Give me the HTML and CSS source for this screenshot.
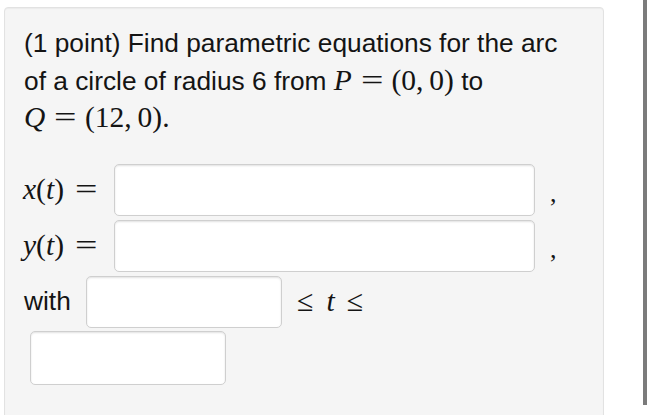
FILE: index.html
```html
<!DOCTYPE html>
<html>
<head>
<meta charset="utf-8">
<link rel="stylesheet" href="styles.css">
</head>
<body>
<div class="page">
  <div class="panel">
    <p class="question">(1 point) Find parametric equations for the arc of a circle of radius 6 from <span class="math"><i>P</i><span class="eq">=</span>(0,&#8201;0)</span> to <span class="math"><i>Q</i><span class="eq">=</span>(12,&#8201;0).</span></p>
    <div class="row">
      <span class="label math"><i>x</i>(<i>t</i>)<span class="eq">=</span></span>
      <span class="field wide"></span>
      <span class="comma">,</span>
    </div>
    <div class="row">
      <span class="label math"><i>y</i>(<i>t</i>)<span class="eq">=</span></span>
      <span class="field wide"></span>
      <span class="comma">,</span>
    </div>
    <div class="row">
      <span class="with">with</span>
      <span class="field narrow"></span>
      <span class="ineq math"><span class="le">≤</span><i>t</i><span class="le">≤</span></span>
    </div>
    <div class="row">
      <span class="field narrow last"></span>
    </div>
  </div>
  <div class="bar"></div>
</div>
</body>
</html>
```

FILE: styles.css
```css
html, body {
  margin: 0;
  padding: 0;
  background: #ffffff;
  height: 100%;
  overflow: hidden;
}

.page {
  display: flex;
  align-items: flex-start;
  height: 415px;
}

.panel {
  box-sizing: border-box;
  width: 600px;
  margin-left: 4px;
  margin-top: 7px;
  height: 420px;
  background: #f5f5f5;
  border: 1px solid #e2e2e2;
  border-radius: 4px;
  box-shadow: inset 0 1px 1px rgba(0, 0, 0, 0.04);
  padding: 17px 22px 0 19px;
  font-family: "Liberation Sans", Arial, sans-serif;
  color: #141414;
}

.question {
  margin: 0 0 26px 0;
  font-size: 26.3px;
  line-height: 37.5px;
}

.math {
  font-family: "Liberation Serif", "Times New Roman", serif;
  font-size: 29.5px;
  line-height: 1;
  white-space: nowrap;
}

.math i {
  font-style: italic;
}

.eq {
  display: inline-block;
  margin: 0 11px 0 12px;
  transform: scaleX(1.35);
}

.row {
  display: flex;
  align-items: center;
  height: 52px;
  margin-bottom: 4px;
}

.label {
  width: 91px;
  margin-left: -1px;
}

.label .eq {
  margin: 0 0 0 14px;
}

.field {
  box-sizing: border-box;
  display: block;
  height: 52px;
  background: #ffffff;
  border: 1px solid #cfcfcf;
  border-radius: 5px;
  box-shadow: inset 0 1px 2px rgba(0, 0, 0, 0.12);
}

.wide {
  width: 421px;
}

.narrow {
  width: 196px;
}

.comma {
  font-family: "Liberation Serif", "Times New Roman", serif;
  font-size: 26px;
  margin-left: 15px;
  position: relative;
  top: 4px;
}

.with {
  font-size: 26.3px;
  width: 62px;
}

.ineq {
  margin-left: 15px;
  display: flex;
  align-items: baseline;
}

.le {
  font-size: 30px;
}

.ineq i {
  margin: 0 12px 0 13px;
}

.last {
  margin-left: 6px;
  height: 54px;
}

.bar {
  width: 4px;
  height: 405px;
  margin-left: 39px;
  background: #7b7b7b;
}
```
